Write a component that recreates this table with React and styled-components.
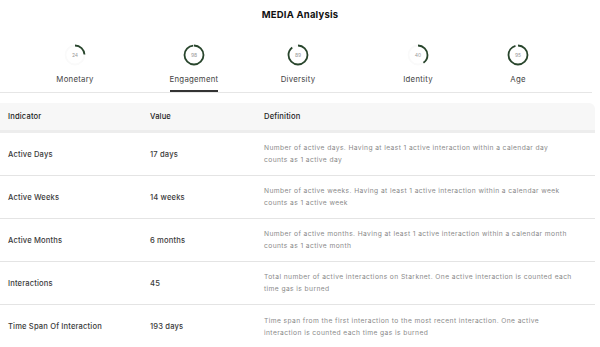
import React from "react";
import styled, { createGlobalStyle } from "styled-components";

const GlobalStyle = createGlobalStyle`
  body {
    margin: 0;
    background: #ffffff;
    font-family: "Inter", "Open Sans", sans-serif;
  }
`;

const Page = styled.div`
  width: 600px;
  height: 347px;
  overflow: hidden;
  background: #fff;
`;

const Title = styled.div`
  text-align: center;
  font-size: 9.5px;
  font-weight: 700;
  letter-spacing: 0.2px;
  color: #111;
  padding-top: 9px;
  height: 26px;
  box-sizing: border-box;
`;

const TabBar = styled.div`
  display: grid;
  grid-template-columns: 110px 128px 80px 160px 40px;
  padding-left: 20px;
  border-bottom: 1px solid #e6e6e6;
  margin-right: 8px;
`;

const Tab = styled.div`
  display: flex;
  flex-direction: column;
  align-items: center;
  padding-top: 18px;
`;

const TabLabel = styled.div`
  font-size: 7.8px;
  letter-spacing: 0.25px;
  color: #444;
  margin-top: 8px;
  padding-bottom: 6px;
  border-bottom: 2px solid ${(p) => (p.$active ? "#333" : "transparent")};
`;

const GaugeNum = styled.text`
  font-size: 5px;
  fill: #999;
  font-family: "Inter", sans-serif;
`;

const Gauge = ({ value }) => {
  const r = 9.5;
  const c = 2 * Math.PI * r;
  return (
    <svg width="22" height="22" viewBox="0 0 22 22">
      <circle cx="11" cy="11" r={r} fill="none" stroke="#fafafa" strokeWidth="1.8" />
      <circle
        cx="11"
        cy="11"
        r={r}
        fill="none"
        stroke="#28452c"
        strokeWidth="1.8"
        strokeDasharray={`${(c * value) / 100} ${c}`}
        transform="rotate(-90 11 11)"
      />
      <GaugeNum x="11" y="13" textAnchor="middle">
        {value}
      </GaugeNum>
    </svg>
  );
};

const Table = styled.div`
  margin-top: 10px;
  margin-right: 5px;
`;

const Row = styled.div`
  display: grid;
  grid-template-columns: 142px 114px 1fr;
  align-items: center;
  height: ${(p) => (p.$head ? "30px" : "43px")};
  padding-left: 8px;
  box-sizing: border-box;
  background: ${(p) => (p.$head ? "#f7f7f7" : "transparent")};
  border-radius: ${(p) => (p.$head ? "0 6px 0 0" : "0")};
  border-bottom: ${(p) => (p.$head ? "3px solid #ededed" : "1px solid #e4e4e4")};
  &:last-child {
    border-bottom: none;
  }
`;

const Cell = styled.div`
  font-size: 7.6px;
  font-weight: 500;
  letter-spacing: 0.15px;
  color: ${(p) => (p.$head ? "#222" : "#3a3a3a")};
`;

const Def = styled.div`
  font-size: 6.7px;
  letter-spacing: 0.4px;
  line-height: 12px;
  color: #8a8a8a;
  padding-right: 23px;
`;

const tabs = [
  { label: "Monetary", value: 24 },
  { label: "Engagement", value: 98, active: true },
  { label: "Diversity", value: 89 },
  { label: "Identity", value: 40 },
  { label: "Age", value: 95 },
];

const rows = [
  {
    name: "Active Days",
    value: "17 days",
    def: "Number of active days. Having at least 1 active interaction within a calendar day counts as 1 active day",
  },
  {
    name: "Active Weeks",
    value: "14 weeks",
    def: "Number of active weeks. Having at least 1 active interaction within a calendar week counts as 1 active week",
  },
  {
    name: "Active Months",
    value: "6 months",
    def: "Number of active months. Having at least 1 active interaction within a calendar month counts as 1 active month",
  },
  {
    name: "Interactions",
    value: "45",
    def: "Total number of active interactions on Starknet. One active interaction is counted each time gas is burned",
  },
  {
    name: "Time Span Of Interaction",
    value: "193 days",
    def: "Time span from the first interaction to the most recent interaction. One active interaction is counted each time gas is burned",
  },
];

const App = () => {
  return (
    <Page>
      <GlobalStyle />
      <Title>MEDIA Analysis</Title>
      <TabBar>
        {tabs.map((t) => (
          <Tab key={t.label}>
            <Gauge value={t.value} />
            <TabLabel $active={t.active}>{t.label}</TabLabel>
          </Tab>
        ))}
      </TabBar>
      <Table>
        <Row $head>
          <Cell $head>Indicator</Cell>
          <Cell $head>Value</Cell>
          <Cell $head>Definition</Cell>
        </Row>
        {rows.map((r) => (
          <Row key={r.name}>
            <Cell>{r.name}</Cell>
            <Cell>{r.value}</Cell>
            <Def>{r.def}</Def>
          </Row>
        ))}
      </Table>
    </Page>
  );
};

export default App;
